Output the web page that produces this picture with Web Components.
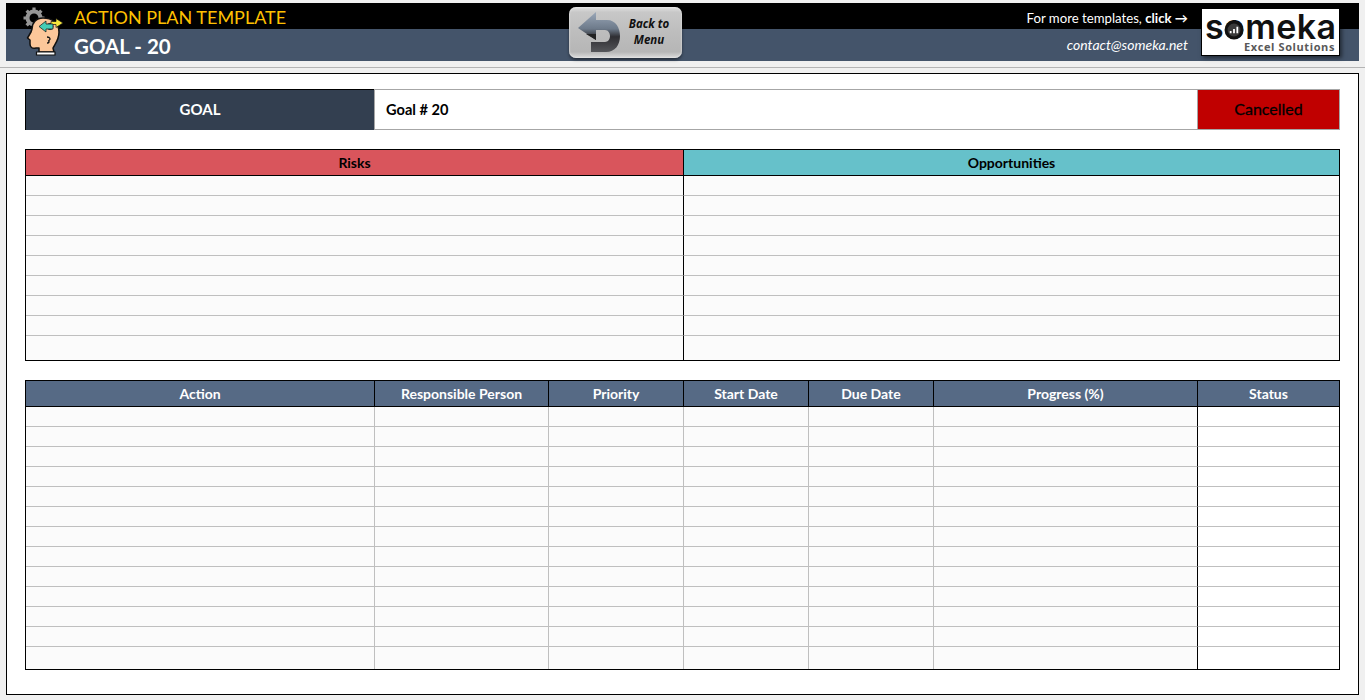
<!DOCTYPE html>
<html>
<head>
<meta charset="utf-8">
<title>Action Plan Template</title>
<style>
    html, body { margin: 0; padding: 0; background: #f0f0f0; }
    body { font-family: Lato, "Open Sans", sans-serif; overflow: hidden; }
</style>
</head>
<body>
<plan-banner>
    <span slot="title">ACTION PLAN TEMPLATE</span>
    <span slot="subtitle">GOAL - 20</span>
</plan-banner>
<plan-sheet>
    <goal-bar status="Cancelled">Goal # 20</goal-bar>
    <plan-table columns="658,655" heads="Risks,Opportunities" colors="#d9555c,#66c1ca" ink="#000" rows="9" last="24"></plan-table>
    <plan-table columns="349,174,135,125,125,264,141" heads="Action,Responsible Person,Priority,Start Date,Due Date,Progress (%),Status" colors="#566a85" ink="#fff" rows="13" last="22" solid="5"></plan-table>
</plan-sheet>

<script>
class BackButton extends HTMLElement {
    constructor() {
        super()
        this.attachShadow({mode: 'open'})
        this.shadowRoot.innerHTML = `
            <style>
                :host {
                    position: absolute;
                    left: 563px;
                    top: 4px;
                    width: 113px;
                    height: 51px;
                    display: block;
                    border-radius: 7px;
                    background: linear-gradient(180deg, #e2e2e2 0%, #c8c8c8 10%, #bdbdbd 50%, #b6b6b6 88%, #dcdcdc 100%);
                    box-shadow: 0 2px 3px rgba(0,0,0,.45), inset 0 0 2px #f4f4f4;
                }
                svg { position: absolute; left: 0; top: 0; }
                div {
                    position: absolute;
                    left: 50px;
                    top: 9px;
                    width: 60px;
                    text-align: center;
                    font: italic 700 11.5px/16px "Open Sans", sans-serif;
                    color: #111;
                }
            </style>
            <svg width="113" height="51" viewBox="0 0 113 51">
                <defs>
                    <linearGradient id="arrow" x1="0" y1="0" x2="0" y2="1">
                        <stop offset="0" stop-color="#9aa7b8"/>
                        <stop offset=".42" stop-color="#6d7a8a"/>
                        <stop offset=".62" stop-color="#2f2f33"/>
                        <stop offset="1" stop-color="#55565a"/>
                    </linearGradient>
                </defs>
                <path fill="url(#arrow)" d="M9 21 L27 5 V13 H38 C47 13 51 21 51 29 C51 38 46 45 37 45 H22 V35 H36 C39 35 41 32 41 29 C41 26 39 23 36 23 H27 V33 Z"/>
                <path fill="#222" d="M17 27 L27 27 V33 Z"/>
            </svg>
            <div>Back to<br>Menu</div>`
    }
}

class SomekaLogo extends HTMLElement {
    constructor() {
        super()
        this.attachShadow({mode: 'open'})
        this.shadowRoot.innerHTML = `
            <style>
                :host {
                    position: absolute;
                    left: 1195px;
                    top: 5px;
                    width: 137px;
                    height: 46px;
                    display: block;
                    background: #fff;
                    border: 1px solid #000;
                    box-shadow: 2px 2px 4px rgba(0,0,0,.5);
                }
                .name {
                    position: absolute;
                    left: 3px;
                    top: 1px;
                    font: 600 34px/34px Inter, sans-serif;
                    letter-spacing: .4px;
                    color: #111;
                    white-space: nowrap;
                }
                .o { position: relative; }
                .o svg { position: absolute; left: 0; top: 14px; }
                .sub {
                    position: absolute;
                    right: 4px;
                    bottom: 1px;
                    font: 700 11px/14px "Open Sans", sans-serif;
                    letter-spacing: .6px;
                    color: #595959;
                }
            </style>
            <span class="name">s<span class="o">o<svg width="20" height="20" viewBox="0 0 18 18"><circle cx="9" cy="9" r="8.5" fill="#111"/><circle cx="9" cy="9" r="5.8" fill="#3a3a3a"/><path d="M6 12 V10 M9 12 V8 M12 12 V6" stroke="#fff" stroke-width="1.6"/></svg></span>meka</span>
            <span class="sub">Excel Solutions</span>`
    }
}

class HeadIcon extends HTMLElement {
    constructor() {
        super()
        this.attachShadow({mode: 'open'})
        this.shadowRoot.innerHTML = `
            <style>
                :host { position: absolute; left: 16px; top: 3px; width: 44px; height: 54px; display: block; }
            </style>
            <svg width="44" height="54" viewBox="0 0 44 54">
                <g fill="none" stroke="#959595">
                    <circle cx="12" cy="12" r="6.5" stroke-width="4"/>
                    <path stroke-width="3.2" d="M12 1.5 V5 M12 19 V22.5 M1.5 12 H5 M19 12 H22.5 M4.6 4.6 L7 7 M17 17 L19.4 19.4 M19.4 4.6 L17 7 M7 17 L4.6 19.4"/>
                </g>
                <path fill="#fcc79a" stroke="#111" stroke-width="1.5" stroke-linejoin="round" d="M21 12 C14 12 10 17 10 23 L9 26 L5.5 32 L8 34 L8 38 C8 41 10 43 14 42 L17 42 L17 46 H32 L31 42 C33 38 37 34 37 26 C37 17 30 12 21 12 Z"/>
                <path fill="none" stroke="#111" stroke-width="1.3" d="M25 31 C28 31 29 33 27 34.5 M26 34.5 C28 35.5 27 37 25 37"/>
                <path fill="#fff" stroke="#111" stroke-width="1.2" d="M14.5 46 H33 V49 H14.5 Z"/>
                <circle cx="28" cy="20.5" r="3.2" fill="#3476a8" stroke="#111" stroke-width=".6"/>
                <path fill="#f6e53c" stroke="#111" stroke-width=".7" d="M29 15.5 H34 V12.5 L41 17 L34 21.5 V18.5 H29 Z"/>
                <path fill="#46cdb6" stroke="#111" stroke-width=".7" d="M17 20.5 L24 15 V18 H31 V23 H24 V26 Z"/>
            </svg>`
    }
}

class PlanBanner extends HTMLElement {
    constructor() {
        super()
        this.attachShadow({mode: 'open'})
        this.shadowRoot.innerHTML = `
            <style>
                :host {
                    display: block;
                    position: relative;
                    margin: 3px 6px 0;
                    width: 1353px;
                }
                .top, .bottom {
                    display: flex;
                    justify-content: space-between;
                    align-items: center;
                    padding: 0 171px 0 68px;
                    box-sizing: border-box;
                    white-space: nowrap;
                }
                .top { height: 26px; padding-top: 2px; background: #000; }
                .bottom { height: 32px; background: #44546a; }
                .title { color: #ffc000; font-size: 18px; }
                .subtitle { color: #fff; font-size: 20.5px; font-weight: 700; padding-top: 2px; }
                .more { color: #fff; font-size: 13.2px; padding-top: 2px; }
                .more b { font-weight: 700; }
                .mail { color: #fff; font-size: 14px; font-style: italic; padding-bottom: 2px; }
                .rule { height: 1px; background: #b4b4b4; margin: 6px -6px 0; width: 1365px; }
            </style>
            <div class="top">
                <span class="title"><slot name="title"></slot></span>
                <span class="more">For more templates, <b>click &#8594;</b></span>
            </div>
            <div class="bottom">
                <span class="subtitle"><slot name="subtitle"></slot></span>
                <span class="mail">contact@someka.net</span>
            </div>
            <div class="rule"></div>
            <head-icon></head-icon>
            <back-button></back-button>
            <someka-logo></someka-logo>`
    }
}

class PlanSheet extends HTMLElement {
    constructor() {
        super()
        this.attachShadow({mode: 'open'})
        this.shadowRoot.innerHTML = `
            <style>
                :host {
                    display: flex;
                    flex-direction: column;
                    gap: 19px;
                    box-sizing: border-box;
                    width: 1353px;
                    height: 622px;
                    margin: 5px 6px 0;
                    padding: 15px 18px 0;
                    background: #fff;
                    border: 1px solid #000;
                }
            </style>
            <slot></slot>`
    }
}

class GoalBar extends HTMLElement {
    constructor() {
        super()
        this.attachShadow({mode: 'open'})
        this.shadowRoot.innerHTML = `
            <style>
                :host {
                    display: grid;
                    grid-template-columns: 349px 823px 143px;
                    height: 41px;
                    font-size: 14.6px;
                    font-weight: 700;
                    color: #000;
                }
                div { display: flex; align-items: center; box-sizing: border-box; }
                .label {
                    justify-content: center;
                    padding-bottom: 2px;
                    font-size: 15px;
                    color: #fff;
                    background: #333f50;
                    border-top: 1px solid #000;
                    border-left: 1px solid #000;
                }
                .value {
                    padding-left: 11px;
                    background: #fff;
                    border: 1px solid #a6a6a6;
                    border-right: 0;
                }
                .status {
                    justify-content: center;
                    padding-bottom: 2px;
                    font-size: 16px;
                    font-weight: 400;
                    -webkit-text-stroke: .3px #000;
                    background: #c00000;
                    border: 1px solid #a6a6a6;
                }
            </style>
            <div class="label">GOAL</div>
            <div class="value"><slot></slot></div>
            <div class="status"></div>`
    }

    connectedCallback() {
        this.shadowRoot.querySelector('.status').textContent = this.getAttribute('status')
    }
}

class PlanTable extends HTMLElement {
    constructor() {
        super()
        this.attachShadow({mode: 'open'})
        this.shadowRoot.innerHTML = `
            <style>
                :host {
                    display: block;
                    width: 1315px;
                    box-sizing: border-box;
                    border: 1px solid #000;
                    font-size: 14px;
                    font-weight: 700;
                }
                .grid { display: grid; }
                .head {
                    height: 26px;
                    display: flex;
                    align-items: center;
                    justify-content: center;
                    box-sizing: border-box;
                    padding-bottom: 1px;
                    border-right: 1px solid #000;
                    border-bottom: 1px solid #000;
                }
                .cell {
                    height: 20px;
                    box-sizing: border-box;
                    background: #fbfbfb;
                    border-right: 1px solid #bfbfbf;
                    border-bottom: 1px solid #bfbfbf;
                }
                .cell.solid { border-right-color: #000; }
                .cell.white { background: #fff; }
                .end { border-right: 0; }
                .cell.last { border-bottom: 0; }
            </style>
            <div class="grid"></div>`
    }

    connectedCallback() {
        const grid = this.shadowRoot.querySelector('.grid')
        const columns = this.getAttribute('columns').split(',')
        const heads = this.getAttribute('heads').split(',')
        const colors = this.getAttribute('colors').split(',')
        const rows = Number(this.getAttribute('rows'))
        const solid = this.hasAttribute('solid') ? Number(this.getAttribute('solid')) : 0
        const count = columns.length

        grid.style.gridTemplateColumns = columns.map(c => c + 'px').join(' ')

        heads.forEach((text, i) => {
            const head = document.createElement('div')
            head.className = 'head' + (i === count - 1 ? ' end' : '')
            head.textContent = text
            head.style.background = colors[i] || colors[0]
            head.style.color = this.getAttribute('ink')
            grid.appendChild(head)
        })

        for (let r = 0; r < rows; r++) {
            for (let c = 0; c < count; c++) {
                const cell = document.createElement('div')
                cell.className = 'cell'
                // the two-column table has a black middle line, the big one only before Status
                if (count === 2 || c === solid) cell.classList.add('solid')
                if (solid && c === count - 1) cell.classList.add('white')
                if (c === count - 1) cell.classList.add('end')
                if (r === rows - 1) {
                    cell.classList.add('last')
                    cell.style.height = this.getAttribute('last') + 'px'
                }
                grid.appendChild(cell)
            }
        }
    }
}

customElements.define('back-button', BackButton)
customElements.define('someka-logo', SomekaLogo)
customElements.define('head-icon', HeadIcon)
customElements.define('plan-banner', PlanBanner)
customElements.define('plan-sheet', PlanSheet)
customElements.define('goal-bar', GoalBar)
customElements.define('plan-table', PlanTable)
</script>
</body>
</html>
